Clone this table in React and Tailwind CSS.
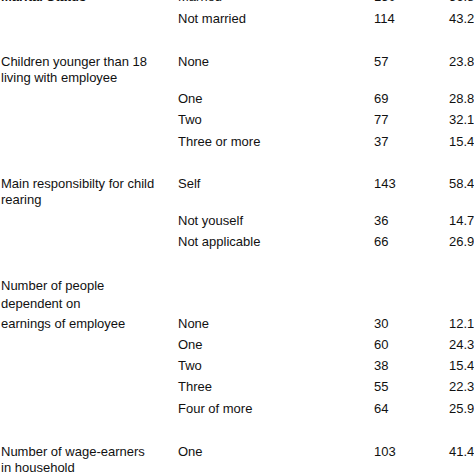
const rows = [
  { h: 22, label: ["Marital Status"], bold: true, cat: "Married", n: "150", p: "56.8" },
  { h: 43, cat: "Not married", n: "114", p: "43.2" },
  { h: 37, label: ["Children younger than 18", "living with employee"], cat: "None", n: "57", p: "23.8" },
  { h: 21, cat: "One", n: "69", p: "28.8" },
  { h: 22, cat: "Two", n: "77", p: "32.1" },
  { h: 42, cat: "Three or more", n: "37", p: "15.4" },
  { h: 37, label: ["Main responsibilty for child", "rearing"], cat: "Self", n: "143", p: "58.4" },
  { h: 21, cat: "Not youself", n: "36", p: "14.7" },
  { h: 43, cat: "Not applicable", n: "66", p: "26.9" },
  { h: 39, label: ["Number of people", "dependent on"], tall: true },
  { h: 21, label: ["earnings of employee"], cat: "None", n: "30", p: "12.1" },
  { h: 21, cat: "One", n: "60", p: "24.3" },
  { h: 21, cat: "Two", n: "38", p: "15.4" },
  { h: 22, cat: "Three", n: "55", p: "22.3" },
  { h: 43, cat: "Four of more", n: "64", p: "25.9" },
  { h: 40, label: ["Number of wage-earners", "in household"], cat: "One", n: "103", p: "41.4" },
];

export default function App() {
  return (
    <div className="w-[474px] h-[474px] overflow-hidden bg-white text-[#111] text-[13px] font-['Liberation_Sans',Arial,sans-serif]">
      <div className="mt-[-11px] pl-[1px]">
        {rows.map((r, i) => (
          <div
            key={i}
            className="grid grid-cols-[177px_196px_75px_1fr]"
            style={{ height: r.h }}
          >
            <div className={r.bold ? "font-bold" : ""}>
              {(r.label || []).map((l, j) => (
                <div key={j} className={r.tall ? "leading-[18px]" : "leading-[16px]"}>
                  {l}
                </div>
              ))}
            </div>
            <div className="leading-[16px]">{r.cat}</div>
            <div className="leading-[16px]">{r.n}</div>
            <div className="leading-[16px]">{r.p}</div>
          </div>
        ))}
      </div>
    </div>
  );
}
